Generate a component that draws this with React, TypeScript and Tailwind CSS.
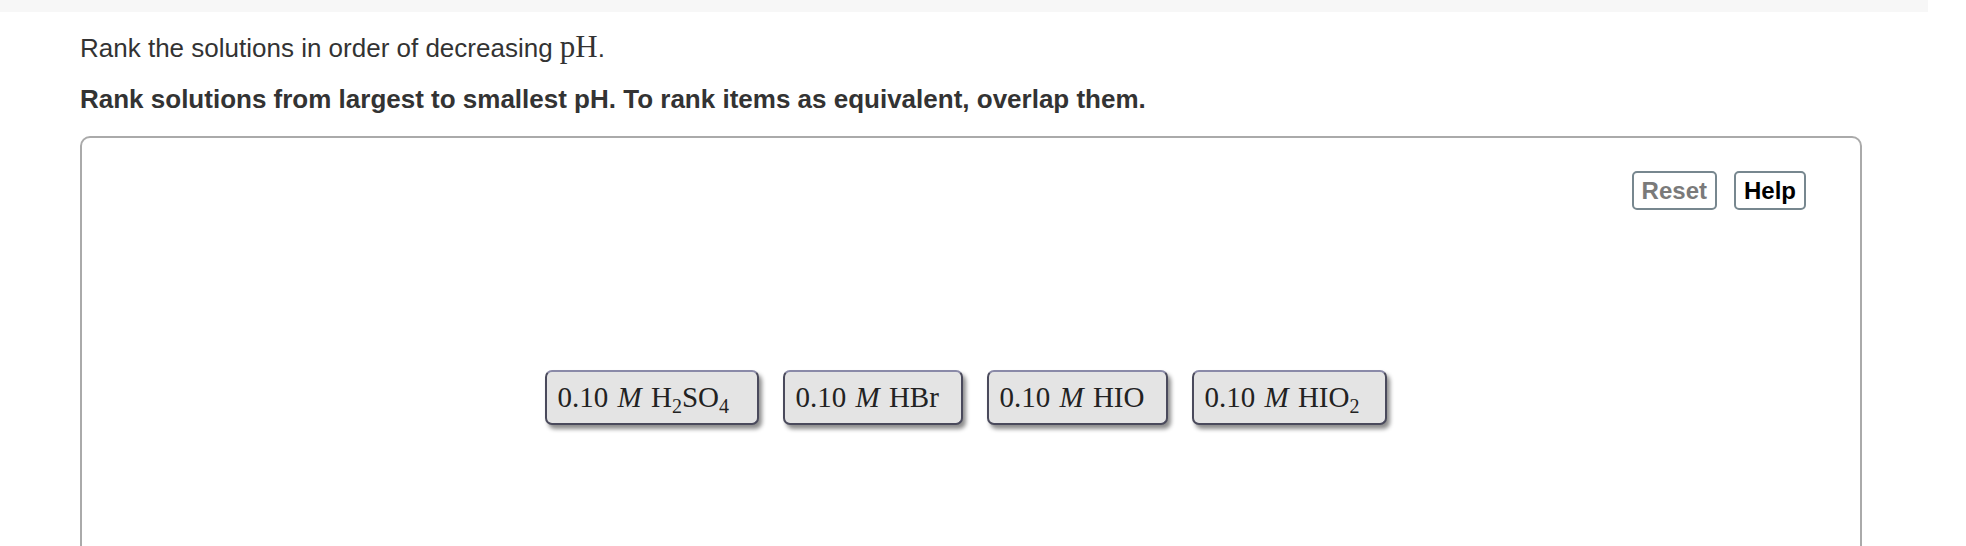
import React from 'react';

const sans = { fontFamily: '"Liberation Sans", Arial, Helvetica, sans-serif' };

function Chem({ children }: { children: React.ReactNode }) {
    return <span className="font-['Liberation_Serif',serif]">{children}</span>;
}

function Sub({ children }: { children: React.ReactNode }) {
    return <span className="relative top-[6px] text-[20px] leading-none">{children}</span>;
}

const chips = [
    { w: 'w-[214px]', body: <>H<Sub>2</Sub>SO<Sub>4</Sub></> },
    { w: 'w-[180px]', body: <>HBr</> },
    { w: 'w-[181px]', body: <>HIO</> },
    { w: 'w-[195px]', body: <>HIO<Sub>2</Sub></> },
];

export default function App() {
    return (
        <div className="w-[1966px] h-[546px] bg-white overflow-hidden" style={sans}>
            {/* top strip */}
            <div className="w-[1928px] h-[12px] bg-[#f7f7f7]"></div>

            <div className="pl-[80px]">
                <p className="mt-[19px] text-[26px] leading-[32px] text-[#333]">
                    Rank the solutions in order of decreasing{' '}
                    <Chem><span className="text-[31px] leading-none">pH</span></Chem>.
                </p>
                <p className="mt-[18px] text-[26px] leading-[32px] font-bold text-[#333]">
                    Rank solutions from largest to smallest pH. To rank items as equivalent, overlap them.
                </p>

                {/* ranking area */}
                <div className="mt-[21px] w-[1782px] h-[460px] border-2 border-[#aaaaaa] rounded-[10px] flex flex-col">
                    <div className="flex justify-end gap-[17px] mt-[33px] pr-[54px]">
                        <button className="h-[39px] px-[8px] border-2 border-[#77878f] rounded-[5px] bg-white text-[24px] leading-none font-bold text-[#7a7a7a]">
                            Reset
                        </button>
                        <button className="h-[39px] px-[8px] border-2 border-[#77878f] rounded-[5px] bg-white text-[24px] leading-none font-bold text-black">
                            Help
                        </button>
                    </div>

                    <div className="flex justify-center gap-[24px] mt-[160px] pr-[11px]">
                        {chips.map((c, i) => (
                            <div
                                key={i}
                                className={`${c.w} h-[55px] flex items-center pl-[11px] bg-[#e4e4e4] border-2 border-[#4a4a5c] border-t-[#8a8aa8] rounded-[7px] shadow-[3px_4px_4px_rgba(0,0,0,0.45)] text-[29px] text-[#222] [word-spacing:2px]`}
                            >
                                <Chem>
                                    0.10 <i>M</i> {c.body}
                                </Chem>
                            </div>
                        ))}
                    </div>
                </div>
            </div>
        </div>
    );
}
